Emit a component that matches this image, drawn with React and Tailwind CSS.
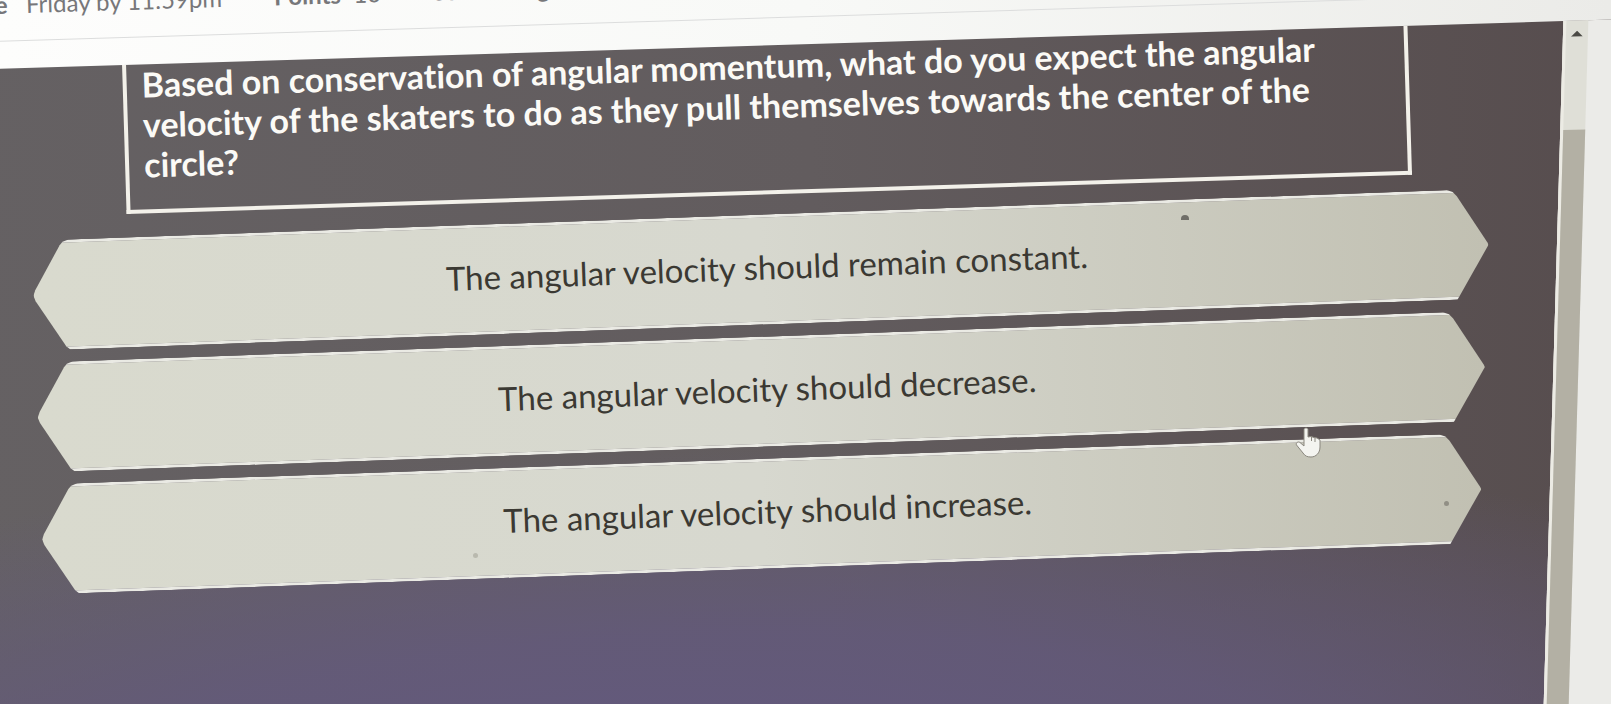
import { useState } from 'react'

const answers = [
  { text: 'The angular velocity should remain constant.', inset: 'pr-0' },
  { text: 'The angular velocity should decrease.', inset: 'pr-2' },
  { text: 'The angular velocity should increase.', inset: 'pr-4' },
]

function AnswerButton({ text, selected, onClick }) {
  return (
    <button
      type="button"
      aria-pressed={selected}
      onClick={onClick}
      className="block h-[110px] w-full cursor-pointer border-y-3 border-[#eaeae4] bg-linear-to-r from-[#d9dace] via-[#d7d8cf] to-[#c1c0b2] pb-1 pl-3 text-center text-[33px] text-[#3b3933] [clip-path:polygon(0_50%,2px_45%,28px_5%,31px_2%,37px_0,calc(100%-40px)_0,calc(100%-34px)_2%,calc(100%-30px)_6%,calc(100%-1px)_49%,100%_51%,calc(100%-33px)_100%,35px_100%,31px_97%,2px_55%)]"
    >
      {text}
    </button>
  )
}

function Scrollbar() {
  return (
    <div className="flex w-[89px] shrink-0 origin-top -skew-x-[3.4deg] bg-[#ebebe8]">
      <div className="flex w-[25px] flex-col border-l-3 border-[#ecebe4] bg-[#dfdfd7]">
        <div className="flex h-[109px] justify-center pt-[10px]">
          <svg viewBox="0 0 12 6" className="h-[6px] w-[12px]" fill="#4b4a45">
            <path d="M0 6 6 0l6 6z" />
          </svg>
        </div>
        <div className="flex-1 bg-[#b3b0a4]" />
      </div>
    </div>
  )
}

function HandCursor() {
  return (
    <svg
      viewBox="0 0 28 32"
      className="pointer-events-none absolute top-[427px] left-[1295px] h-[32px] w-[28px]"
      fill="#f4f4f0"
      stroke="#8a877e"
      strokeWidth="1"
      strokeLinejoin="round"
    >
      <path d="M9 2.5C9 .5 13 .5 13 2.5V10l3-.5 3 1 3 .5 3 2v7c0 6-4 10-9 10-4 0-6-1-8-4l-6.500-8c-1-2 1.500-4 3.500-2.500L9 19z" />
      <path d="M16.500 10v4M20 11v4" fill="none" />
    </svg>
  )
}

export default function App() {
  const [selected, setSelected] = useState(null)

  return (
    <div className="relative h-screen overflow-hidden bg-linear-to-r from-[#fdfdfc] via-[#f8f9f7] to-[#ebebe8] font-[Lato,sans-serif] [font-variant-ligatures:none]">
      <div className="-mx-10 flex min-h-[calc(100vh+100px)] origin-top-left -rotate-[1.75deg] flex-col">
        <header className="flex h-[43px] items-start gap-[52px] border-b border-[#dcdddd] pl-[3px] text-2xl leading-[12px] text-[#77777a]">
          <p>
            <b>Due</b> &nbsp;&nbsp;Friday by 11:59pm
          </p>
          <p>
            <b>Points</b> &nbsp;10
          </p>
          <p>
            <b>Submitting</b>
          </p>
        </header>

        <main className="mt-[27px] flex flex-1 bg-[radial-gradient(ellipse_80%_45%_at_42%_100%,#63597f_0%,#63597dcc_45%,#63597c00_100%),linear-gradient(to_right,#656163,#625c5e_50%,#564c4d)]">
          <div className="min-w-0 flex-1">
            <div className="mr-[156px] ml-[160px] h-[149px] border-x-4 border-b-4 border-[#f3f1ea] px-[15px]">
              <h1 className="text-[34px] leading-[40px] font-bold text-[#fbfaf6]">
                Based on conservation of angular momentum, what do you expect the angular velocity of the
                skaters to do as they pull themselves towards the center of the circle?
              </h1>
            </div>

            <div className="mt-[20px] mr-[81px] ml-[65px] flex -rotate-[0.3deg] flex-col gap-[12px]">
              {answers.map(({ text, inset }, i) => (
                <div key={text} className={inset}>
                  <AnswerButton
                    text={text}
                    selected={selected === i}
                    onClick={() => setSelected(i)}
                  />
                </div>
              ))}
            </div>
          </div>
          <Scrollbar />
        </main>
      </div>

      {/* specks on the glass */}
      <span className="pointer-events-none absolute top-[215px] left-[1181px] h-[5px] w-[8px] rounded-t-full bg-[#6f6e68]" />
      <span className="pointer-events-none absolute top-[501px] left-[1444px] size-[5px] rounded-full bg-[#918f85]" />
      <span className="pointer-events-none absolute top-[553px] left-[473px] size-[5px] rounded-full bg-[#b9b9ae]" />
      <HandCursor />
    </div>
  )
}
